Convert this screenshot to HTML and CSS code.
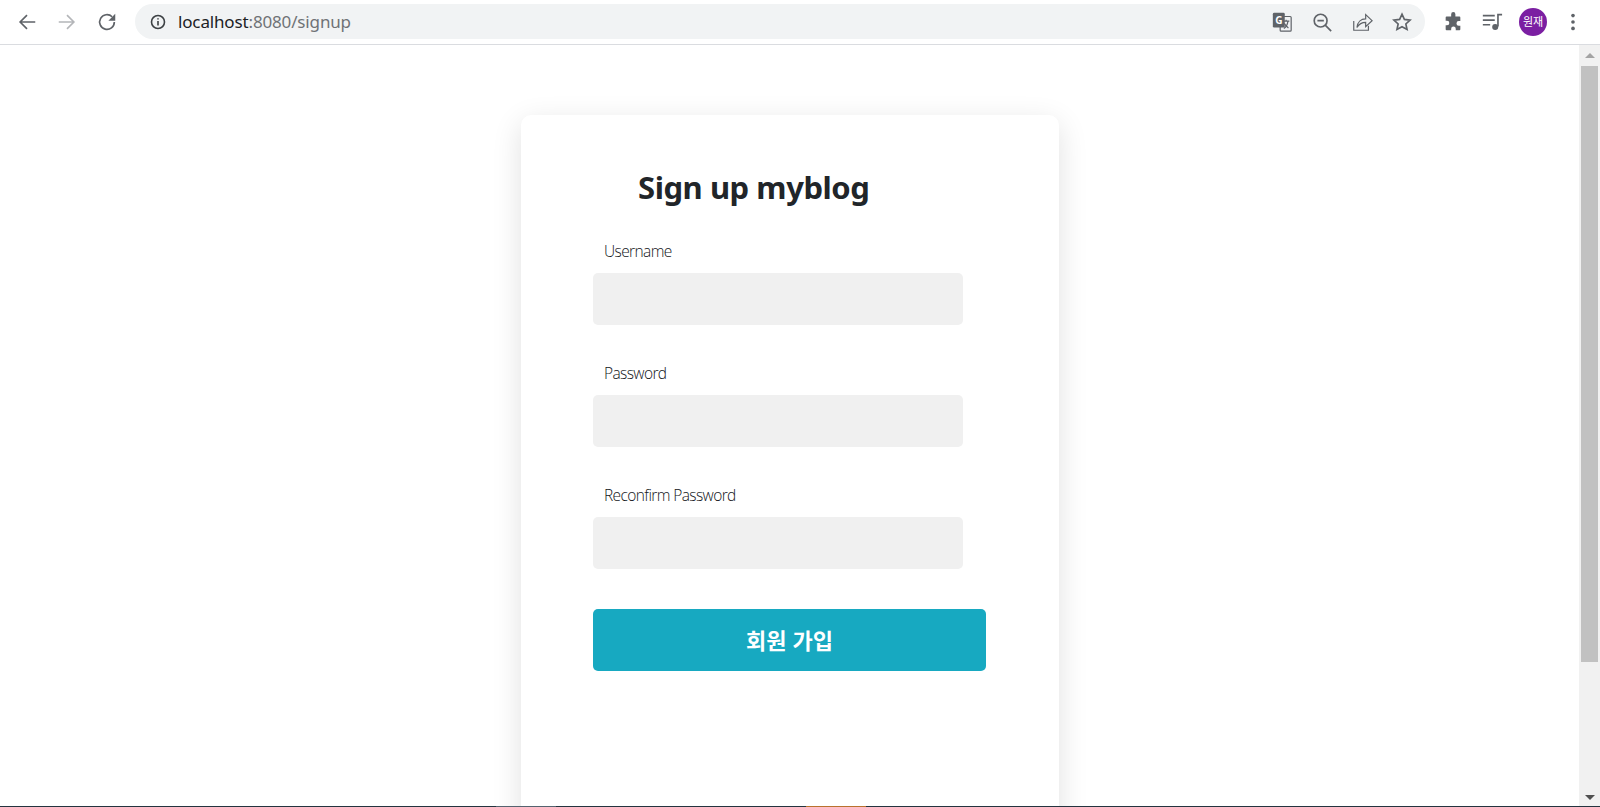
FILE: index.html
```html
<!DOCTYPE html>
<html lang="ko">
<head>
  <meta charset="UTF-8" />
  <meta name="viewport" content="width=device-width, initial-scale=1.0"/>
  <title>Sign up myblog</title>
  <link rel="stylesheet" href="styles.css">
</head>
<body>

  <!-- Browser toolbar -->
  <header class="toolbar">
    <div class="nav-btns">
      <svg class="icon" viewBox="0 0 24 24"><path d="M21 12H4.500M12 4.500 4.500 12l7.500 7.500" /></svg>
      <svg class="icon icon-off" viewBox="0 0 24 24"><path d="M3 12h16.500M12 4.500l7.500 7.500-7.500 7.500" /></svg>
      <svg class="icon" viewBox="0 0 24 24"><path d="M20 12a8 8 0 1 1-2.400-5.700" /><path class="solid" d="M21 3v7.500h-7.500z" /></svg>
    </div>
    <div class="omnibox">
      <svg class="info" viewBox="0 0 16 16"><circle cx="8" cy="8" r="6.500" /><path d="M8 7v4.500M8 4.200v1.400" /></svg>
      <span class="url"><b>localhost</b>:8080/signup</span>
      <div class="omni-icons">
        <svg class="icon icon-thin" viewBox="0 0 24 24"><rect x="10" y="6" width="12" height="16" rx="1" /><rect class="solid" x="2" y="2" width="13" height="16" rx="1.500" /><text class="glyph" x="8.500" y="14">G</text><path d="M13 11h7M16.500 9.500V11M14 19c2.500-1.500 4-4 4.500-8M14.500 13.500c1 2 2.500 3.500 4.500 5" /></svg>
        <svg class="icon" viewBox="0 0 24 24"><circle cx="10.500" cy="10.500" r="7" /><path d="M15.500 15.500 22 22M7 10.500h7" /></svg>
        <svg class="icon icon-thin" viewBox="0 0 24 24"><path d="M3 11v10h16v-5" /><path d="M6.500 18c.5-6 4.500-9.500 9.500-9.500V4l7 6.500-7 6.500v-4.500c-4 0-7 1.500-9.500 5.500z" /></svg>
        <svg class="icon" viewBox="0 0 24 24"><path d="m12 3.500 2.600 5.700 6.200.7-4.600 4.200 1.300 6.100L12 17.200l-5.500 3 1.300-6.100-4.600-4.200 6.200-.7z" /></svg>
      </div>
    </div>
    <div class="ext-btns">
      <svg class="icon" viewBox="0 0 24 24"><path class="solid" d="M10 3.500a2.300 2.300 0 0 1 4.600 0V6H19a1 1 0 0 1 1 1v4h-1.700a2.500 2.500 0 0 0 0 5H20v4a1 1 0 0 1-1 1h-4v-1.700a2.500 2.500 0 0 0-5 0V21H5a1 1 0 0 1-1-1v-4.500h1.500a2.500 2.500 0 0 0 0-5H4V7a1 1 0 0 1 1-1h5z" /></svg>
      <svg class="icon icon-list" viewBox="0 0 24 24"><path d="M2 5h13M2 10h13M2 15h8M18.500 17V4H23" /><circle class="solid" cx="15.500" cy="17.500" r="3.300" /></svg>
      <span class="avatar">원재</span>
      <svg class="icon" viewBox="0 0 24 24"><circle class="solid" cx="12" cy="5" r="2" /><circle class="solid" cx="12" cy="12" r="2" /><circle class="solid" cx="12" cy="19" r="2" /></svg>
    </div>
  </header>

  <div class="viewport">
    <!-- Page -->
    <main class="page">
      <div class="card">
        <h1>Sign up myblog</h1>
        <form class="signup-form" onsubmit="return false">
          <div class="field">
            <label for="username">Username</label>
            <input type="text" id="username">
          </div>
          <div class="field">
            <label for="password">Password</label>
            <input type="password" id="password">
          </div>
          <div class="field">
            <label for="reconfirm">Reconfirm Password</label>
            <input type="password" id="reconfirm">
          </div>
          <button class="signup-btn" type="submit">회원 가입</button>
        </form>
      </div>
    </main>

    <!-- Scrollbar -->
    <div class="scrollbar">
      <span class="arrow arrow-up"></span>
      <span class="thumb"></span>
      <span class="arrow arrow-down"></span>
    </div>
  </div>

  <!-- Sliver of the taskbar -->
  <div class="taskbar">
    <span class="task task-gray"></span>
    <span class="task task-orange"></span>
  </div>

</body>
</html>
```

FILE: styles.css
```css
:root {
  --primary: #17a9c1;
  --text-dark: #212529;
  --icon: #5f6368;
  --field: #f0f0f0;
}

* {
  margin: 0;
  padding: 0;
  box-sizing: border-box;
}

html, body {
  height: 100%;
  overflow: hidden;
}

body {
  display: flex;
  flex-direction: column;
  font-family: "Noto Sans", "Noto Sans CJK KR", sans-serif;
  background-color: white;
  color: var(--text-dark);
}

/* Browser toolbar */
.toolbar {
  flex: none;
  height: 45px;
  display: flex;
  align-items: center;
  padding: 0 0 1px 16px;
  border-bottom: 1px solid #dadce0;
}

.icon {
  width: 22px;
  height: 22px;
  fill: none;
  stroke: var(--icon);
  stroke-width: 1.8;
}

.icon-thin {
  stroke-width: 1.3;
}

.icon .solid {
  fill: var(--icon);
  stroke: none;
}

.icon .glyph {
  fill: white;
  stroke: none;
  font-size: 11px;
  font-weight: 700;
  text-anchor: middle;
}

.icon-off {
  stroke: #b4b6b9;
}

.icon-list {
  margin-left: -1px;
}

.nav-btns {
  display: flex;
  gap: 18px;
  width: 119px;
}

.omnibox {
  width: 1290px;
  height: 35px;
  display: flex;
  align-items: center;
  padding: 0 12px 0 15px;
  border-radius: 18px;
  background: #f1f3f4;
}

.info {
  width: 16px;
  height: 16px;
  fill: none;
  stroke: #3c4043;
  stroke-width: 1.6;
  margin-right: 12px;
}

.url {
  flex: 1;
  font-size: 17px;
  color: #6f7276;
  letter-spacing: -0.15px;
}

.url b {
  font-weight: 400;
  color: #202124;
}

.omni-icons {
  display: flex;
  gap: 18px;
}

.ext-btns {
  display: flex;
  align-items: center;
  margin-left: 17px;
  gap: 18px;
}

.avatar {
  width: 28px;
  height: 28px;
  margin: 0 -3px 0 -2px;
  border-radius: 50%;
  background: #7b1fa2;
  color: white;
  font-size: 11px;
  line-height: 28px;
  text-align: center;
}

/* Page */
.viewport {
  flex: 1;
  min-height: 0;
  display: flex;
}

.page {
  flex: 1;
  min-height: 0;
  overflow: hidden;
  padding: 70px 0 0 521px;
}

.card {
  width: 538px;
  height: 760px;
  padding: 49px 0 0 72px;
  border-radius: 10px;
  background: white;
  box-shadow: 0 8px 30px rgba(0, 0, 0, 0.12);
}

.card h1 {
  margin-left: 45px;
  font-size: 31px;
  line-height: 46px;
  font-weight: 700;
  letter-spacing: -0.45px;
}

.signup-form {
  margin-top: 30px;
  width: 393px;
}

.field {
  margin-bottom: 37px;
}

.field label {
  display: block;
  margin: 0 0 10px 11px;
  font-size: 15.500px;
  line-height: 23px;
  font-weight: 300;
  font-family: "Open Sans", "Noto Sans", sans-serif;
  color: #111418;
  letter-spacing: -0.6px;
}

.field input {
  display: block;
  width: 370px;
  height: 52px;
  border: none;
  border-radius: 5px;
  background: var(--field);
}

.signup-btn {
  display: block;
  width: 100%;
  height: 62px;
  margin-top: 40px;
  padding-bottom: 3px;
  border: none;
  border-radius: 5px;
  background-color: var(--primary);
  color: white;
  font-family: "Noto Sans CJK KR", sans-serif;
  font-size: 22px;
  font-weight: 700;
  cursor: pointer;
}

/* Scrollbar */
.scrollbar {
  flex: none;
  width: 21px;
  display: flex;
  flex-direction: column;
  align-items: center;
  background: #f1f1f1;
}

.arrow {
  flex: none;
  width: 0;
  height: 0;
  border-left: 5px solid transparent;
  border-right: 5px solid transparent;
}

.arrow-up {
  margin-top: 8px;
  border-bottom: 5px solid #a3a3a3;
}

.thumb {
  width: 17px;
  height: 596px;
  margin-top: 8px;
  background: #c1c1c1;
}

.arrow-down {
  margin-top: auto;
  margin-bottom: 6px;
  border-top: 5px solid #505050;
}

/* Taskbar sliver */
.taskbar {
  flex: none;
  height: 1px;
  display: flex;
  background: #24343f;
}

.task {
  width: 60px;
}

.task-gray {
  margin-left: 496px;
  background: #55636f;
}

.task-orange {
  margin-left: 250px;
  background: #b8722e;
}
```
